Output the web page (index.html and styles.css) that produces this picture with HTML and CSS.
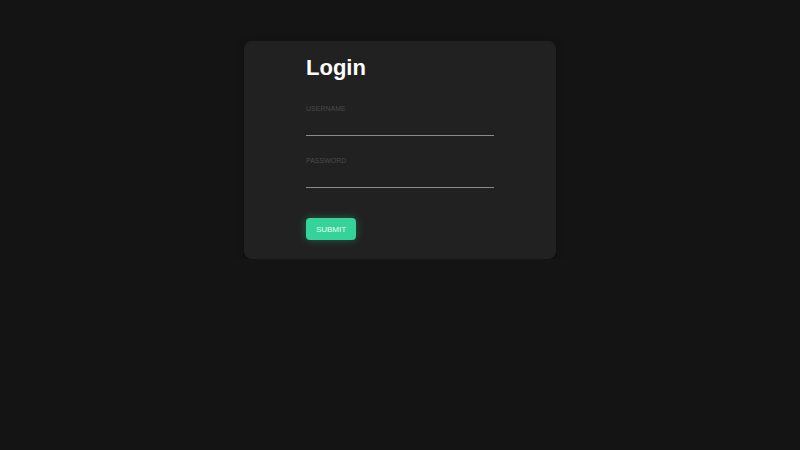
FILE: index.html
```html
<!DOCTYPE html>
<html lang="en">

<head>
    <meta charset="UTF-8">
    <meta name="viewport" content="width=device-width, initial-scale=1.0">
    <title>Login</title>
    <link rel="stylesheet" href="styles.css">
</head>

<body>
    <div class="login-card">
        <h1>Login</h1>

        <form id="loginForm">
            <label for="username">Username</label>
            <input type="text" id="username" name="username">

            <label for="password">Password</label>
            <input type="password" id="password" name="password">

            <button type="submit">Submit</button>
        </form>
    </div>
</body>

</html>
```

FILE: styles.css
```css
body {
    font-family: "Liberation Sans", Arial, sans-serif;
    background-color: #141414;
    margin: 0;
    padding: 0;
}

.login-card {
    width: 188px;
    margin: 41px auto 0;
    padding: 13px 62px 19px;
    background-color: #212121;
    border-radius: 8px;
    box-shadow: 0 2px 8px rgba(0, 0, 0, 0.35);
}

h1 {
    margin: 0;
    font-size: 22px;
    line-height: 28px;
    color: #fff;
}

form {
    display: flex;
    flex-direction: column;
    align-items: flex-start;
    margin-top: 22px;
}

label {
    display: block;
    font-size: 7px;
    line-height: 9px;
    text-transform: uppercase;
    color: #4a4a4a;
}

input[type="text"],
input[type="password"] {
    width: 100%;
    height: 23px;
    padding: 0;
    margin: 0 0 20px;
    border: none;
    border-bottom: 1px solid #8a8a8a;
    background: transparent;
    color: #ddd;
    box-sizing: border-box;
    outline: none;
}

button {
    margin-top: 10px;
    width: 50px;
    height: 22px;
    padding: 0;
    background-color: #34d399;
    color: #eefaf5;
    border: none;
    border-radius: 4px;
    font-family: inherit;
    font-size: 8px;
    text-transform: uppercase;
    cursor: pointer;
    box-shadow: 0 0 8px rgba(52, 211, 153, 0.35);
}

button:hover {
    background-color: #2fbf8b;
}
```
